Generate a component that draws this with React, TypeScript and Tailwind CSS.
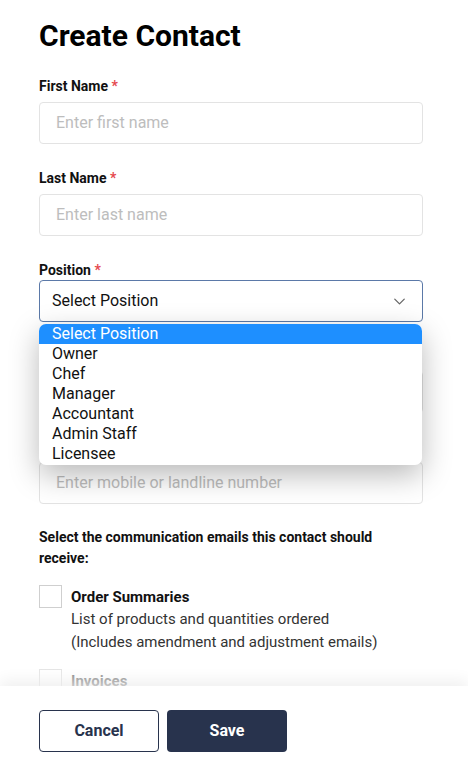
import React from "react";
import { ChevronDown } from "lucide-react";

const font = { fontFamily: "Roboto, 'Liberation Sans', sans-serif" };

function Label({ text, tight }: { text: string; tight?: boolean }) {
  return (
    <div className={"text-[14px] leading-[20px] font-bold text-[#111] " + (tight ? "mb-0" : "mb-[6px]")}>
      {text} <span className="text-[#e5484d]">*</span>
    </div>
  );
}

function Input({ placeholder }: { placeholder: string }) {
  return (
    <div className="h-[42px] w-full rounded-[4px] border border-[#e3e3e3] bg-white flex items-center pl-4 text-[16px] text-[#bdbdbd]">
      {placeholder}
    </div>
  );
}

const options = ["Select Position", "Owner", "Chef", "Manager", "Accountant", "Admin Staff", "Licensee"];

export default function App() {
  return (
    <div style={font} className="h-[771px] w-full flex flex-col overflow-hidden bg-white">
      <div className="relative flex-1 overflow-hidden pl-[39px] pr-[45px]">
        <h1 className="pt-[18px] text-[30px] leading-[36px] font-bold text-black">Create Contact</h1>

        <div className="mt-[22px]">
          <Label text="First Name" />
          <Input placeholder="Enter first name" />
        </div>
        <div className="mt-[24px]">
          <Label text="Last Name" />
          <Input placeholder="Enter last name" />
        </div>
        <div className="mt-[24px] relative">
          <Label text="Position" tight />
          <div className="h-[42px] w-full rounded-[4px] border border-[#5b79a8] bg-white flex items-center justify-between pl-[12px] pr-[13px] text-[16px] text-[#111]">
            <span>Select Position</span>
            <ChevronDown size={19} strokeWidth={1.6} color="#666" />
          </div>
          <div className="absolute z-10 left-0 right-[1px] top-[64px] bg-white rounded-[7px] pb-[1px] shadow-[0_10px_30px_rgba(0,0,0,0.28)] overflow-hidden">
            {options.map((o, i) => (
              <div
                key={o}
                className={
                  "h-[20px] leading-[20px] pl-[13px] text-[16px] " +
                  (i === 0 ? "bg-[#1e8fff] text-white" : "text-[#111]")
                }
              >
                {o}
              </div>
            ))}
          </div>
        </div>
        <div className="mt-[23px]">
          <Label text="Email" />
          <Input placeholder="Enter email address" />
        </div>
        <div className="mt-[23px]">
          <Label text="Phone" />
          <Input placeholder="Enter mobile or landline number" />
        </div>

        <p className="mt-[23px] text-[14px] leading-[21px] font-bold text-[#111]">
          Select the communication emails this contact should receive:
        </p>

        <div className="mt-[16px] flex gap-[9px]">
          <div className="w-[23px] h-[23px] shrink-0 border border-[#cfcfcf] bg-white" />
          <div className="pt-[1px]">
            <div className="text-[15px] leading-[22px] font-bold text-[#111]">Order Summaries</div>
            <div className="text-[15px] leading-[23px] text-[#333]">
              List of products and quantities ordered
              <br />
              (Includes amendment and adjustment emails)
            </div>
          </div>
        </div>

        <div className="mt-[15px] flex gap-[9px]">
          <div className="w-[23px] h-[23px] shrink-0 border border-[#cfcfcf] bg-white" />
          <div className="pt-[1px]">
            <div className="text-[15px] leading-[22px] font-bold text-[#111]">Invoices</div>
            <div className="text-[15px] leading-[23px] text-[#333]">Invoice emails</div>
          </div>
        </div>

        <div className="pointer-events-none absolute left-0 right-0 bottom-0 h-[40px] bg-gradient-to-b from-white/0 to-white/80" />
      </div>

      <div className="relative z-20 h-[85px] shrink-0 bg-white px-[39px] pt-[24px] flex gap-[8px] shadow-[0_-6px_14px_rgba(0,0,0,0.06)]">
        <button className="w-[120px] h-[42px] rounded-[4px] border border-[#28334d] bg-white text-[16px] font-bold text-[#28334d]">
          Cancel
        </button>
        <button className="w-[120px] h-[42px] rounded-[4px] bg-[#28334d] text-[16px] font-bold text-white">
          Save
        </button>
      </div>
    </div>
  );
}
